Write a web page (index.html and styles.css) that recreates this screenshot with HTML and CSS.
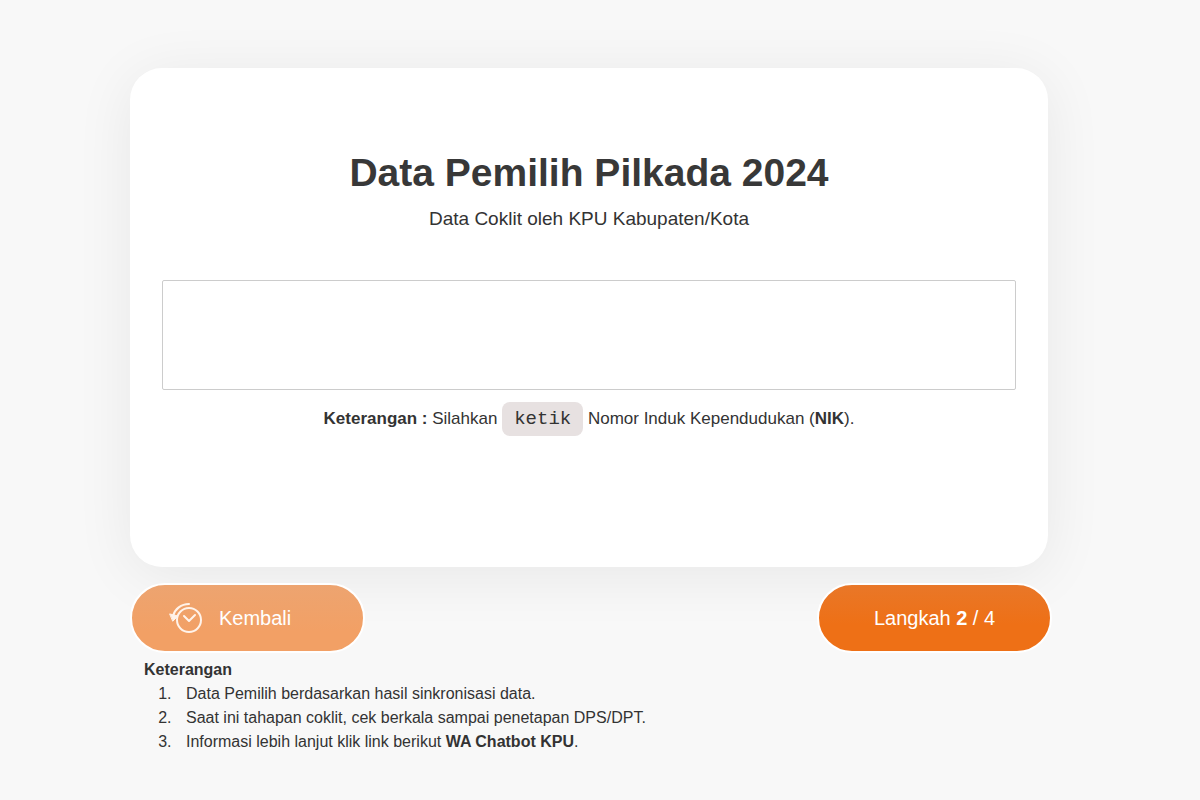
FILE: index.html
```html
<!doctype html>
<html lang="id">
<head>
<meta charset="utf-8">
<meta name="viewport" content="width=device-width, initial-scale=1">
<title>Data Pemilih Pilkada 2024</title>
<link rel="stylesheet" href="styles.css">
</head>
<body>
	<form class="wrap">
		<div class="card">
			<h1 class="title">Data Pemilih Pilkada 2024</h1>
			<p class="subtitle">Data Coklit oleh KPU Kabupaten/Kota</p>
			<input id="nik" class="nik" type="text" aria-label="Nomor Induk Kependudukan">
			<label class="hint" for="nik"><b>Keterangan :</b> Silahkan <code class="key">ketik</code> Nomor Induk Kependudukan (<b>NIK</b>).</label>
		</div>
		<div class="actions">
			<button class="btn back" type="button">
				<svg class="icon" viewBox="0 0 34 32" width="34" height="32" aria-hidden="true">
					<circle cx="20" cy="18" r="12"/>
					<path d="M20 2C12 2 6 7 4 14"/>
					<path d="M15 14l5 5 6-6"/>
					<path class="head" d="M1 12l8 2-5 5z"/>
				</svg>
				Kembali
			</button>
			<button class="btn next" type="submit"><span>Langkah <b>2</b> / 4</span></button>
		</div>
		<div class="notes">
			<b>Keterangan</b>
			<ol class="list">
				<li>Data Pemilih berdasarkan hasil sinkronisasi data.</li>
				<li>Saat ini tahapan coklit, cek berkala sampai penetapan DPS/DPT.</li>
				<li>Informasi lebih lanjut klik link berikut <a class="link" href="#">WA Chatbot KPU</a>.</li>
			</ol>
		</div>
	</form>
</body>
</html>
```
FILE: styles.css
```css
*{box-sizing:border-box;}
body{margin:0;background:#f8f8f8;color:#333;font-family:"Liberation Sans",Arial,sans-serif;font-size:16px;line-height:24px;}
.wrap{padding:68px 152px 40px 130px;}
.card{display:flex;flex-direction:column;align-items:center;padding:80px 32px 131px;border-radius:32px;background:#fff;box-shadow:0 8px 60px rgba(0,0,0,.07);text-align:center;}
.title{margin:0;font-size:39px;line-height:50px;color:#383838;}
.subtitle{margin:8px 0 48px;font-size:19px;line-height:26px;}
.nik{width:100%;height:110px;padding:0 32px;border:1px solid #ccc;border-radius:2px;background:#fff;color:#333;font-family:inherit;font-size:40px;text-align:center;}
.hint{margin-top:12px;font-size:17px;line-height:34px;}
.key{display:inline-block;padding:0 12px;border-radius:8px;background:#e7e1e1;font-family:"Liberation Mono","Courier New",monospace;font-size:19px;}
.actions{display:flex;justify-content:space-between;margin:16px -4px 0 0;}
.btn{display:flex;align-items:center;width:235px;height:70px;border:2px solid #fff;border-radius:35px;color:#fff;font-family:inherit;font-size:20px;cursor:pointer;}
.back{gap:16px;padding:0 37px;background:linear-gradient(#eda470,#f2a065 70%);}
.next{justify-content:center;background:linear-gradient(#e97728,#ee7016 60%);}
.icon{fill:none;stroke:#fff3ea;stroke-width:2;stroke-linecap:round;stroke-linejoin:round;}
.head{fill:#fff3ea;stroke-width:1;}
.notes{margin:5px 0 0 14px;}
.list{margin:0;padding-left:32px;}
.list li{padding-left:10px;}
.link{color:inherit;font-weight:bold;text-decoration:none;}
```
